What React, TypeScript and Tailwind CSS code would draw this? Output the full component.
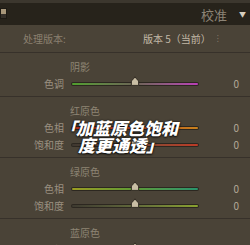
const font = "font-['Noto_Sans_CJK_SC','Noto_Sans',sans-serif]";

function Thumb() {
  return (
    <svg
      className="absolute left-[59px] top-[-6px]"
      width="10"
      height="11"
      viewBox="0 0 10 11"
    >
      <path
        d="M5 0.8 Q6 2.5 8.6 5 L8.6 9.4 L1.4 9.4 L1.4 5 Q4 2.5 5 0.8 Z"
        fill="#c9bea4"
        stroke="#2a251d"
        strokeWidth="0.9"
        strokeLinejoin="round"
      />
    </svg>
  );
}

function SliderRow({ label, track }: { label: string; track: string }) {
  return (
    <div className="flex h-[17px] items-center">
      <div className="w-[64px] text-right text-[10px] text-[#9a9080]">{label}</div>
      <div className="relative ml-[7px] h-[4px] w-[128px] rounded-full bg-[#2c2720] p-[1px]">
        <div className={`h-[2px] w-full rounded-full ${track}`} />
        <Thumb />
      </div>
      <div className="flex-1 pr-[11px] text-right text-[10px] text-[#b3aa98]">0</div>
    </div>
  );
}

function Section({
  title,
  rows,
}: {
  title: string;
  rows: { label: string; track: string }[];
}) {
  return (
    <div className="border-t border-[#37312a] pt-[5px] pb-[4px]">
      <div className="flex h-[17px] items-center pl-[70px] text-[10px] text-[#8e8574]">
        {title}
      </div>
      {rows.map((r) => (
        <SliderRow key={r.label} label={r.label} track={r.track} />
      ))}
    </div>
  );
}

export default function App() {
  return (
    <div className={`relative h-[245px] w-[250px] overflow-hidden bg-[#4a4337] ${font}`}>
      <div className="h-[3px] bg-[#3c372e]" />

      {/* header */}
      <div className="flex h-[22px] items-center bg-[#27231b]">
        <div className="mt-[5px] flex h-[11px] w-[7px] flex-col self-start border border-[#1d1a14]">
          <div className="h-[5px] bg-[#a8977a]" />
          <div className="flex-1 bg-[#35302a]" />
        </div>
        <div className="ml-auto text-[13px] leading-none text-[#8c8476]">校准</div>
        <div className="ml-[12px] mr-[4px] text-[7px] text-[#d6cebe]">▼</div>
      </div>

      {/* process version */}
      <div className="flex h-[27px] items-center text-[10px]">
        <div className="pl-[23px] text-[#8a8070]">处理版本:</div>
        <div className="ml-auto text-[#c2b9a7]">版本 5（当前）</div>
        <div className="ml-[6px] mr-[31px] text-[8px] leading-none text-[#8a8070]">⁝</div>
      </div>

      <Section
        title="阴影"
        rows={[
          {
            label: "色调",
            track: "bg-linear-to-r from-[#4f9e2c] via-[#6b6454] to-[#b93cb6]",
          },
        ]}
      />
      <Section
        title="红原色"
        rows={[
          {
            label: "色相",
            track: "bg-linear-to-r from-[#b8301f] via-[#b9421f] to-[#c9821d]",
          },
          {
            label: "饱和度",
            track: "bg-linear-to-r from-[#3e3830] via-[#7a4a35] to-[#bc3a26]",
          },
        ]}
      />
      <Section
        title="绿原色"
        rows={[
          {
            label: "色相",
            track: "bg-linear-to-r from-[#9a9c22] via-[#5c9a34] to-[#27946c]",
          },
          {
            label: "饱和度",
            track: "bg-linear-to-r from-[#3e3a30] via-[#626a3a] to-[#8aa22e]",
          },
        ]}
      />
      <Section
        title="蓝原色"
        rows={[
          {
            label: "色相",
            track: "bg-linear-to-r from-[#2c8aa0] via-[#3a5ab0] to-[#6a3ab8]",
          },
        ]}
      />

      {/* caption overlay */}
      <div className="absolute left-[60px] top-[119px] text-[17px] font-black italic leading-[17px] text-white [text-shadow:0_0_2px_rgba(0,0,0,0.9),0_1px_2px_rgba(0,0,0,0.8)]">
        <div className="flex">
          <span className="mr-[-1px]">「</span>
          <span>加蓝原色饱和</span>
        </div>
        <div className="pl-[18px]">度更通透」</div>
      </div>
    </div>
  );
}
